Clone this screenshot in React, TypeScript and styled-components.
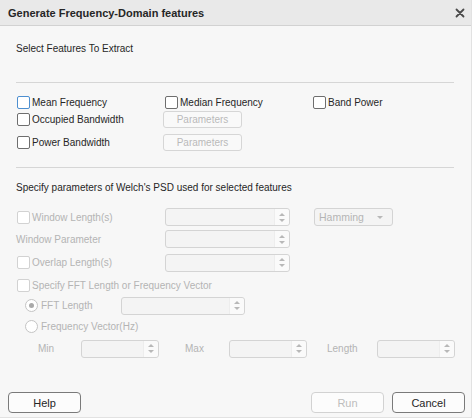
import styled, { createGlobalStyle } from "styled-components";

const GlobalStyle = createGlobalStyle`
  html, body {
    margin: 0;
    padding: 0;
    background: #ffffff;
  }
  body {
    font-family: "Liberation Sans", Arial, sans-serif;
    font-size: 10px;
    color: #262626;
  }
`;

const Dialog = styled.div`
  width: 472px;
  height: 418px;
  background: #f7f7f7;
  border-right: 1px solid #e2e2e2;
  border-bottom: 1px solid #e2e2e2;
  display: flex;
  flex-direction: column;
  box-sizing: border-box;
`;

const TitleBar = styled.div`
  height: 26px;
  box-sizing: border-box;
  background: #e9e9e9;
  border-bottom: 1px solid #d2d2d2;
  display: flex;
  align-items: center;
  justify-content: space-between;
  padding: 0 5px 0 8px;
  font-weight: bold;
  font-size: 11px;
  color: #262626;
`;

const Body = styled.div`
  flex: 1;
  display: flex;
  flex-direction: column;
  padding: 0 16px 0 16px;
`;

const SectionLabel = styled.div<{ $top: number }>`
  margin-top: ${(p) => p.$top}px;
  height: 16px;
  line-height: 16px;
`;

const Divider = styled.div<{ $top: number }>`
  margin-top: ${(p) => p.$top}px;
  height: 1px;
  background: #d6d6d6;
  margin-right: 1px;
`;

const FeatureGrid = styled.div`
  margin-top: 11px;
  display: grid;
  grid-template-columns: 148px 148px auto;
  grid-template-rows: 17px 17px 6px 17px;
  align-items: center;
`;

const Row = styled.div<{ $h: number; $indent?: number }>`
  height: ${(p) => p.$h}px;
  display: flex;
  align-items: center;
  padding-left: ${(p) => p.$indent ?? 0}px;
`;

const CheckLabel = styled.label<{ $disabled?: boolean }>`
  display: flex;
  align-items: center;
  gap: 2px;
  color: ${(p) => (p.$disabled ? "#b4b4b4" : "#262626")};
  white-space: nowrap;
`;

const Box = styled.span<{ $disabled?: boolean; $focused?: boolean }>`
  width: 11px;
  height: 11px;
  margin-left: 1px;
  border: 1px solid
    ${(p) => (p.$focused ? "#4d8fd0" : p.$disabled ? "#d2d2d2" : "#6e6e6e")};
  border-radius: 2px;
  background: #ffffff;
  flex: none;
`;

const Radio = styled.span<{ $checked?: boolean }>`
  width: 11px;
  height: 11px;
  border: 1px solid #c4c4c4;
  border-radius: 50%;
  background: #ffffff;
  display: flex;
  align-items: center;
  justify-content: center;
  flex: none;
  margin-right: 1px;
  &::after {
    content: "";
    width: 5px;
    height: 5px;
    border-radius: 50%;
    background: ${(p) => (p.$checked ? "#a9a9a9" : "transparent")};
  }
`;

const SmallButton = styled.div`
  width: 79px;
  height: 17px;
  box-sizing: border-box;
  border: 1px solid #d6d6d6;
  border-radius: 3px;
  background: #f9f9f9;
  color: #b9b9b9;
  display: flex;
  align-items: center;
  justify-content: center;
  margin-left: -1px;
`;

const FieldLabel = styled.div<{ $w: number; $pad?: number }>`
  width: ${(p) => p.$w}px;
  padding-left: ${(p) => p.$pad ?? 0}px;
  box-sizing: border-box;
  color: #b4b4b4;
  flex: none;
  white-space: nowrap;
`;

const SpinBox = styled.div<{ $w: number }>`
  width: ${(p) => p.$w}px;
  height: 18px;
  box-sizing: border-box;
  border: 1px solid #d4d4d4;
  border-radius: 3px;
  background: #f4f4f4;
  display: flex;
  justify-content: flex-end;
  flex: none;
`;

const SpinArrows = styled.div`
  width: 14px;
  border-left: 1px solid #ededed;
  display: flex;
  flex-direction: column;
  align-items: center;
  justify-content: center;
  gap: 3px;
  background: #fafafa;
  border-radius: 0 3px 3px 0;
`;

const Tri = styled.span<{ $up?: boolean }>`
  width: 0;
  height: 0;
  border-left: 3px solid transparent;
  border-right: 3px solid transparent;
  ${(p) =>
    p.$up
      ? "border-bottom: 3px solid #b8b8b8;"
      : "border-top: 3px solid #b8b8b8;"}
`;

const Dropdown = styled.div`
  width: 79px;
  height: 18px;
  box-sizing: border-box;
  border: 1px solid #d4d4d4;
  border-radius: 3px;
  background: #f4f4f4;
  color: #b4b4b4;
  font-size: 10.5px;
  display: flex;
  align-items: center;
  justify-content: space-between;
  padding: 0 9px 0 4px;
  margin-left: 24px;
`;

const Footer = styled.div`
  margin: auto -16px 4px;
  padding: 0 6px 0 8px;
  display: flex;
  align-items: center;
  gap: 8px;
`;

const DialogButton = styled.div<{ $disabled?: boolean }>`
  width: 73px;
  height: 21px;
  box-sizing: border-box;
  border: 1px solid ${(p) => (p.$disabled ? "#d2d2d2" : "#7a7a7a")};
  border-radius: 4px;
  background: #fcfcfc;
  color: ${(p) => (p.$disabled ? "#bdbdbd" : "#262626")};
  display: flex;
  align-items: center;
  justify-content: center;
  font-size: 11px;
`;

const Spacer = styled.div`
  flex: 1;
`;

const Spin = ({ w }: { w: number }) => (
  <SpinBox $w={w}>
    <SpinArrows>
      <Tri $up />
      <Tri />
    </SpinArrows>
  </SpinBox>
);

const Check = ({
  label,
  disabled,
  focused,
}: {
  label: string;
  disabled?: boolean;
  focused?: boolean;
}) => (
  <CheckLabel $disabled={disabled}>
    <Box $disabled={disabled} $focused={focused} />
    {label}
  </CheckLabel>
);

const App = () => {
  return (
    <>
      <GlobalStyle />
      <Dialog>
        <TitleBar>
          Generate Frequency-Domain features
          <svg width="12" height="12" viewBox="0 0 12 12">
            <path
              d="M2.5 2.5 L9.5 9.5 M9.5 2.5 L2.5 9.5"
              stroke="#4a4a4a"
              strokeWidth="1.8"
              strokeLinecap="round"
            />
          </svg>
        </TitleBar>
        <Body>
          <SectionLabel $top={15}>Select Features To Extract</SectionLabel>
          <Divider $top={25} />
          <FeatureGrid>
            <Check label="Mean Frequency" focused />
            <Check label="Median Frequency" />
            <Check label="Band Power" />
            <Check label="Occupied Bandwidth" />
            <SmallButton>Parameters</SmallButton>
            <span />
            <span />
            <span />
            <span />
            <Check label="Power Bandwidth" />
            <SmallButton>Parameters</SmallButton>
            <span />
          </FeatureGrid>
          <Divider $top={16} />
          <SectionLabel $top={12}>
            Specify parameters of Welch's PSD used for selected features
          </SectionLabel>
          <Row $h={22} style={{ marginTop: 10 }}>
            <FieldLabel $w={149}>
              <Check label="Window Length(s)" disabled />
            </FieldLabel>
            <Spin w={125} />
            <Dropdown>
              Hamming
              <Tri />
            </Dropdown>
          </Row>
          <Row $h={22}>
            <FieldLabel $w={149}>Window Parameter</FieldLabel>
            <Spin w={125} />
          </Row>
          <Row $h={25}>
            <FieldLabel $w={149}>
              <Check label="Overlap Length(s)" disabled />
            </FieldLabel>
            <Spin w={125} />
          </Row>
          <Row $h={20}>
            <Check label="Specify FFT Length or Frequency Vector" disabled />
          </Row>
          <Row $h={21} $indent={9}>
            <FieldLabel $w={96}>
              <CheckLabel $disabled>
                <Radio $checked />
                FFT Length
              </CheckLabel>
            </FieldLabel>
            <Spin w={124} />
          </Row>
          <Row $h={21} $indent={9}>
            <CheckLabel $disabled>
              <Radio />
              Frequency Vector(Hz)
            </CheckLabel>
          </Row>
          <Row $h={21} style={{ marginTop: 1 }}>
            <FieldLabel $w={65} $pad={22}>
              Min
            </FieldLabel>
            <Spin w={78} />
            <FieldLabel $w={70} $pad={26}>
              Max
            </FieldLabel>
            <Spin w={78} />
            <FieldLabel $w={70} $pad={20}>
              Length
            </FieldLabel>
            <Spin w={78} />
          </Row>
          <Footer>
            <DialogButton>Help</DialogButton>
            <Spacer />
            <DialogButton $disabled>Run</DialogButton>
            <DialogButton>Cancel</DialogButton>
          </Footer>
        </Body>
      </Dialog>
    </>
  );
};

export default App;
